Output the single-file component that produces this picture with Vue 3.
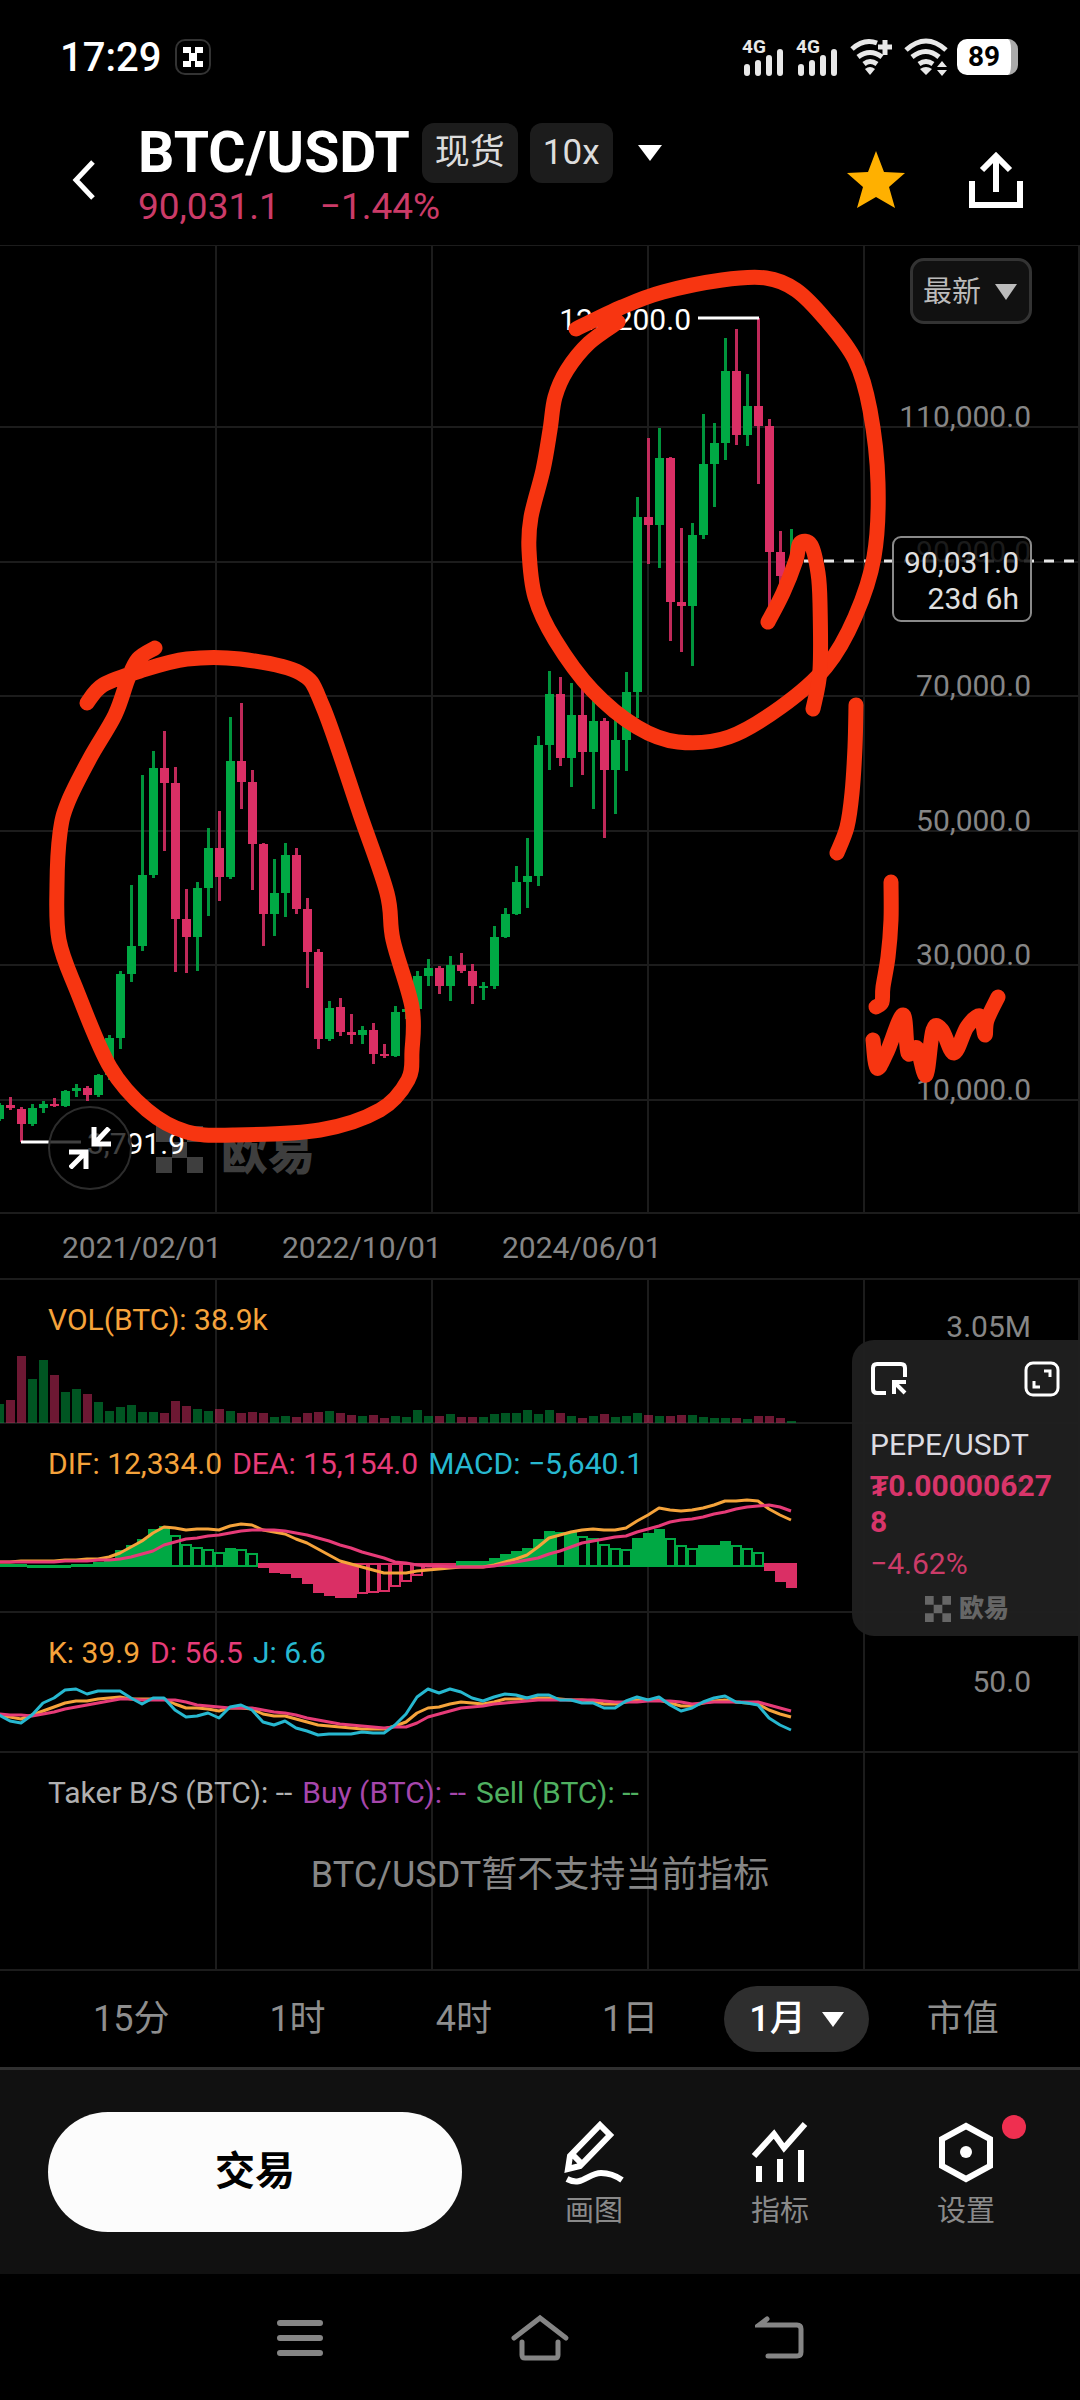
<template>
  <div class="app">
    <div class="status-bar">
      <div class="status-left">
        <span class="time">17:29</span>
        <span class="app-badge">
          <svg width="20" height="20" viewBox="0 0 5 5"><path d="M0 0h2v1.5H0zM3 0h2v1.5H3zM1.5 1.5h2v2h-2zM0 3.5h2V5H0zM3 3.5h2V5H3z" fill="#fff" /></svg>
        </span>
      </div>
      <div class="status-right">
        <svg v-for="n in 2" :key="n" class="signal" width="44" height="38" viewBox="0 0 44 38">
          <text x="1" y="15" font-size="19" font-weight="700" fill="#e8e8e8">4G</text>
          <path d="M6 29v6M17 25v10M28 20v15M39 14v21" stroke="#e8e8e8" stroke-width="6" stroke-linecap="round" />
        </svg>
        <svg width="44" height="38" viewBox="0 0 44 38" fill="none" stroke="#e8e8e8" stroke-width="5">
          <path d="M3 11Q15 0 28 5M9 19Q21 10 33 19M15 26Q21 21 28 26M29 9H43M36 2V17" />
          <path d="M16 31Q21 27 26 31L21 37Z" fill="#e8e8e8" stroke="none" />
        </svg>
        <svg width="46" height="38" viewBox="0 0 46 38" fill="none" stroke="#e8e8e8" stroke-width="5">
          <path d="M3 12Q23 -6 43 12M9 19Q23 8 36 19M16 26Q23 21 30 26" />
          <path d="M17 31Q23 27 29 31L23 37ZM34 29L39 23L44 29ZM34 32L39 38L44 32Z" fill="#e8e8e8" stroke="none" />
        </svg>
        <span class="battery">89</span>
      </div>
    </div>

    <header>
      <button class="icon-btn back" aria-label="返回">
        <svg width="24" height="40" viewBox="0 0 24 40"><path d="M21 2L4 20L21 38" fill="none" stroke="#fff" stroke-width="5" /></svg>
      </button>
      <div class="pair">
        <div class="pair-row">
          <h1>BTC/USDT</h1>
          <span class="chip">现货</span>
          <span class="chip">10x</span>
          <button class="icon-btn more" aria-label="切换交易对">
            <svg width="26" height="16" viewBox="0 0 26 16"><path d="M1 0H25L13 16Z" fill="#fff" /></svg>
          </button>
        </div>
        <div class="price-row">
          <span>90,031.1</span>
          <span>−1.44%</span>
        </div>
      </div>
      <button class="icon-btn star" aria-label="收藏">
        <svg width="60" height="60" viewBox="0 0 60 60"><path d="M30 1L38 22L59 23L43 37L49 58L30 47L11 58L17 37L1 23L22 22Z" fill="#ffb000" /></svg>
      </button>
      <button class="icon-btn" aria-label="分享">
        <svg width="56" height="58" viewBox="0 0 56 58" fill="none" stroke="#fff" stroke-width="6">
          <path d="M4 30V54H52V30M28 41V5M14 19L28 5L42 19" />
        </svg>
      </button>
    </header>

    <section class="chart">
      <svg viewBox="0 0 1080 968">
        <path :d="gridLines(968)" class="grid" />
        <path v-for="p in priceTicks" :key="p" :d="`M0 ${priceY(p)}H1080`" class="grid" />
        <g class="watermark">
          <path d="M156 880h16v16h-16zM187 880h16v16h-16zM172 896h15v16h-15zM156 911h16v16h-16zM187 911h16v16h-16z" />
          <text x="221" y="923" font-size="47">欧易</text>
        </g>
        <g v-for="(c, i) in candles" :key="i" :fill="candleColor(c)">
          <rect :x="candleX(i) - 1" :y="priceY(c[1])" width="3" :height="priceY(c[2]) - priceY(c[1])" opacity="0.88" />
          <rect
            :x="candleX(i) - 4"
            :y="priceY(Math.max(c[0], c[3]))"
            width="9"
            :height="Math.max(2, Math.abs(priceY(c[0]) - priceY(c[3])))"
          />
        </g>
        <path d="M698 72H759M21 896H81" stroke="#fff" stroke-width="3" />
        <text x="691" y="84" class="mark" text-anchor="end">126,200.0</text>
        <text x="185" y="908" class="mark" text-anchor="end">3,791.9</text>
        <text v-for="p in priceTicks" :key="p" x="1031" :y="priceY(p)" class="axis" text-anchor="end">{{ p }},000.0</text>
        <path d="M804 315H1080" stroke="#e6e6e6" stroke-width="3" stroke-dasharray="10 10" />
        <rect x="893" y="291" width="138" height="84" rx="8" class="price-tag" />
        <text x="1019" y="327" class="tag-text" text-anchor="end">90,031.0</text>
        <text x="1019" y="363" class="tag-text" text-anchor="end">23d 6h</text>
        <path v-for="(s, i) in strokes" :key="'s' + i" :d="smooth(s)" class="brush" />
      </svg>
      <button class="price-mode">
        最新
        <svg width="22" height="16" viewBox="0 0 22 16"><path d="M0 0H22L11 16Z" fill="#bbb" /></svg>
      </button>
      <button class="collapse" aria-label="收起">
        <svg width="42" height="42" viewBox="0 0 42 42" fill="none" stroke="#fff" stroke-width="5">
          <path d="M25 0V17H42M26 16L40 1M0 25H17V42M16 26L1 41" />
        </svg>
      </button>
    </section>

    <div class="dates">
      <span v-for="d in dates" :key="d">{{ d }}</span>
    </div>

    <section class="indicators">
      <div class="panel">
        <svg viewBox="0 0 1080 144">
          <path :d="gridLines(144)" class="grid" />
          <rect
            v-for="(v, i) in volumes"
            :key="i"
            :x="candleX(i) - 4"
            :y="143 - v"
            width="9"
            :height="v"
            :fill="candleColor(candles[i])"
            opacity="0.5"
          />
          <text x="1031" y="57" class="axis" text-anchor="end">3.05M</text>
        </svg>
        <p class="legend"><span class="orange">VOL(BTC): 38.9k</span></p>
      </div>

      <div class="panel">
        <svg viewBox="0 0 1080 189">
          <path :d="gridLines(189)" class="grid" />
          <rect
            v-for="(b, i) in macdBars"
            :key="i"
            :x="candleX(i) - 4"
            :y="b.y"
            width="9"
            :height="b.h"
            :fill="b.hollow ? '#000' : b.color"
            :stroke="b.color"
            stroke-width="2"
          />
          <polyline :points="linePoints(dif)" class="line orange" />
          <polyline :points="linePoints(dea)" class="line pink" />
          <text x="1031" y="72" class="axis" text-anchor="end">10.0k</text>
        </svg>
        <p class="legend">
          <span class="orange">DIF: 12,334.0</span>
          <span class="pink">DEA: 15,154.0</span>
          <span class="cyan">MACD: −5,640.1</span>
        </p>
      </div>

      <div class="panel">
        <svg viewBox="0 0 1080 140">
          <path :d="gridLines(140)" class="grid" />
          <polyline :points="linePoints(kLine)" class="line orange" />
          <polyline :points="linePoints(dLine)" class="line pink" />
          <polyline :points="linePoints(jLine)" class="line cyan" />
          <text x="1031" y="79" class="axis" text-anchor="end">50.0</text>
        </svg>
        <p class="legend">
          <span class="orange">K: 39.9</span>
          <span class="pink">D: 56.5</span>
          <span class="cyan">J: 6.6</span>
        </p>
      </div>

      <div class="panel">
        <svg viewBox="0 0 1080 218">
          <path :d="gridLines(218)" class="grid" />
        </svg>
        <p class="legend">
          <span class="gray">Taker B/S (BTC): --</span>
          <span class="purple">Buy (BTC): --</span>
          <span class="green">Sell (BTC): --</span>
        </p>
        <p class="unsupported">BTC/USDT暂不支持当前指标</p>
      </div>

      <aside class="float-card">
        <div class="float-tools">
          <button class="icon-btn" aria-label="返回应用">
            <svg width="38" height="36" viewBox="0 0 38 36" fill="none" stroke="#fff" stroke-width="4">
              <path d="M16 32H7Q3 32 3 28V7Q3 3 7 3H31Q35 3 35 7V16M24 33V21H36M25 22L35 32" />
            </svg>
          </button>
          <button class="icon-btn" aria-label="展开">
            <svg width="36" height="36" viewBox="0 0 36 36" fill="none" stroke="#fff" stroke-width="3">
              <rect x="2" y="2" width="32" height="32" rx="7" />
              <path d="M20 10H26V16M10 20V26H16" />
            </svg>
          </button>
        </div>
        <div class="float-name">PEPE/USDT</div>
        <div class="float-price">₮0.000006278</div>
        <div class="float-change">−4.62%</div>
        <div class="float-logo">
          <svg width="26" height="26" viewBox="0 0 3 3"><path d="M0 0h1v1H0zM2 0h1v1H2zM1 1h1v1H1zM0 2h1v1H0zM2 2h1v1H2z" fill="#666" /></svg>
          欧易
        </div>
      </aside>
    </section>

    <div class="periods">
      <button v-for="p in periods" :key="p" :class="{ active: p === period }" @click="period = p">
        {{ p }}
        <svg v-if="p === '1月'" width="22" height="15" viewBox="0 0 22 15"><path d="M0 0H22L11 15Z" fill="#fff" /></svg>
      </button>
    </div>

    <footer>
      <button class="trade">交易</button>
      <div class="tools">
        <button class="tool">
          <svg width="60" height="64" viewBox="0 0 60 64" fill="none" stroke="#fff" stroke-width="6">
            <path d="M36 4L46 14L16 45L4 48L6 35ZM8 33L18 43" />
            <path d="M3 58C18 66 24 52 37 52Q48 52 58 59" />
          </svg>
          画图
        </button>
        <button class="tool">
          <svg width="60" height="64" viewBox="0 0 60 64" fill="none" stroke="#fff" stroke-width="6">
            <path d="M4 35L24 13L34 27L55 3M9 45V61M30 38V61M51 29V61" />
          </svg>
          指标
        </button>
        <button class="tool">
          <svg width="60" height="64" viewBox="0 0 60 64" fill="none" stroke="#fff" stroke-width="6">
            <path d="M30 5L54 18V45L30 58L6 45V18Z" />
            <circle cx="30" cy="31" r="6" fill="#fff" stroke="none" />
          </svg>
          设置
          <i class="dot"></i>
        </button>
      </div>
    </footer>

    <nav>
      <button class="icon-btn" aria-label="菜单">
        <svg width="48" height="44" viewBox="0 0 48 44" stroke="#858585" stroke-width="6" stroke-linecap="round"><path d="M4 7H44M4 22H44M4 37H44" /></svg>
      </button>
      <button class="icon-btn" aria-label="主页">
        <svg width="60" height="48" viewBox="0 0 60 48" fill="none" stroke="#858585" stroke-width="5" stroke-linecap="round">
          <path d="M4 24L30 4L56 24M12 28V41Q12 44 15 44H45Q48 44 48 41V28" />
        </svg>
      </button>
      <button class="icon-btn" aria-label="后退">
        <svg width="50" height="46" viewBox="0 0 50 46" fill="none" stroke="#858585" stroke-width="5" stroke-linecap="round">
          <path d="M12 4L4 10H42Q46 10 46 14V37Q46 41 42 41H13" />
        </svg>
      </button>
    </nav>
  </div>
</template>

<script setup>
import { ref } from 'vue'

const UP = '#00a944'
const DOWN = '#da2f65'

const periods = ['15分', '1时', '4时', '1日', '1月', '市值']
const period = ref('1月')
const dates = ['2021/02/01', '2022/10/01', '2024/06/01']
const priceTicks = [110, 90, 70, 50, 30, 10]

// 月线 [开, 高, 低, 收],单位:千 USDT
const candles = [
  [7.2, 9.5, 6.9, 9.2], [9.2, 10.4, 8.5, 8.8], [8.7, 9, 3.8, 6.4], [6.4, 9.4, 6.2, 8.8],
  [8.8, 9.9, 8, 9.4], [9.4, 10.3, 8.9, 9.1], [9.1, 11.5, 8.9, 11.4], [11.4, 12.4, 10.5, 11.8],
  [11.8, 12.1, 9.9, 10.7], [10.7, 13.9, 10.4, 13.7], [13.7, 19.7, 13, 19.2], [19.2, 29.2, 17.6, 28.7],
  [28.7, 41.9, 27.6, 32.9], [32.9, 58.3, 32.2, 43.5], [43.5, 61.8, 43, 59.3], [59.3, 64.8, 47, 57.1],
  [57.1, 59.5, 29, 36.9], [36.9, 41.3, 28.8, 34.2], [34.2, 42.4, 29.2, 41.5], [41.5, 50.4, 37.4, 47.5],
  [47.5, 52.9, 39.6, 43.1], [43.1, 66.9, 42.9, 60.4], [60.4, 69, 53.2, 57.3], [57.3, 59, 41.2, 48],
  [48, 48.2, 32.9, 37.7], [37.7, 45.8, 34.4, 40.8], [40.8, 48.2, 37.2, 46.4], [46.4, 47.5, 37.7, 38.4],
  [38.4, 40, 26.7, 32], [32, 32.4, 17.6, 19.1], [19.1, 24.7, 18.7, 23.7], [23.8, 25.1, 19.5, 20.1],
  [20.1, 22.8, 18.3, 19.7], [19.7, 21, 18.3, 20.4], [20.4, 21.4, 15.4, 16.8], [16.8, 18.3, 16.3, 16.5],
  [16.5, 24, 16.4, 23.1], [23.1, 23.7, 22, 23.5], [23.5, 29.2, 22, 28.4], [28.4, 30.9, 27, 29.6],
  [29.6, 29.9, 25.8, 27], [27, 31.4, 24.7, 30.1], [30.1, 31.8, 28.9, 29.2], [29.2, 30.2, 24.2, 27],
  [26.9, 27.5, 24.8, 27], [27, 35.9, 26.5, 34.2], [34.2, 38.5, 34.1, 37.6], [37.6, 44.8, 37.5, 42.4],
  [42.4, 48.9, 38.5, 43.3], [43.3, 64.1, 41.8, 62.7], [62.7, 73.7, 59, 70.3], [70.3, 72.8, 59.6, 60.8],
  [60.8, 72, 56.5, 67.2], [67.2, 71, 58.3, 61.7], [61.7, 69.3, 53.2, 66.3], [66.3, 66.8, 48.9, 59],
  [59, 66.7, 52.5, 63.5], [63.5, 73.6, 58.9, 70.6], [70.6, 99.6, 66.8, 96.6], [96.6, 108.4, 89.6, 95.4],
  [95.4, 109.9, 89.1, 105.4], [105.4, 105.5, 78.2, 84], [84, 95, 76.6, 83.4], [83.4, 95.7, 74.5, 94],
  [94, 111.9, 93.4, 104.5], [104.5, 110.6, 98.1, 107.6], [107.6, 123.2, 105.1, 118.3], [118.3, 124.6, 107.3, 108.8],
  [108.8, 117.9, 107.2, 113.1], [113.1, 126.2, 101.5, 110.2], [110.2, 111.2, 80.5, 91.4], [91.4, 94.6, 86, 87.9],
  [87.9, 94.8, 87.5, 90],
]

const volumes = [
  19, 23, 67, 44, 63, 48, 31, 34, 29, 21, 12, 16, 18, 11, 11, 10, 22, 17, 14, 12, 14, 12, 10, 11, 10,
  6, 7, 6, 10, 11, 12, 10, 8, 7, 8, 5, 7, 6, 13, 7, 7, 9, 6, 6, 6, 9, 10, 10, 13, 9,
  13, 10, 7, 5, 7, 9, 6, 7, 10, 8, 7, 7, 8, 8, 6, 5, 5, 5, 4, 7, 7, 5, 2,
]

const macd = [
  1, 1, 1, 0, 0, 0, 0, 1, 1, 3, 6, 15, 20, 26, 36, 39, 30, 21, 18, 16, 13, 17, 16, 12, -3,
  -8, -9, -13, -19, -28, -31, -33, -33, -29, -28, -27, -22, -17, -11, -5, -3, -1, 4, 4, 4, 7, 11, 14, 17, 26,
  34, 33, 33, 29, 27, 21, 17, 16, 27, 32, 36, 27, 20, 17, 20, 20, 24, 20, 17, 13, -6, -17, -23,
]

// 以下各线为面板内的纵坐标
const dif = [
  138, 138, 137, 137, 137, 137, 136, 136, 135, 135, 133, 129, 123, 117, 109, 103, 104, 106, 105, 105, 106, 102, 100, 101, 106,
  108, 110, 115, 119, 125, 131, 137, 140, 143, 146, 149, 149, 149, 147, 146, 145, 144, 143, 143, 143, 141, 138, 135, 131, 123,
  114, 111, 108, 106, 105, 106, 106, 104, 97, 91, 84, 86, 87, 86, 84, 81, 77, 77, 76, 77, 85, 91, 96,
]
const dea = [
  138, 138, 138, 138, 138, 138, 137, 137, 137, 136, 136, 135, 133, 130, 127, 121, 118, 115, 114, 112, 111, 109, 107, 106, 106,
  106, 107, 109, 111, 114, 117, 121, 124, 128, 131, 134, 138, 139, 141, 142, 142, 143, 143, 143, 143, 142, 140, 138, 136, 134,
  130, 127, 123, 119, 117, 115, 113, 112, 108, 105, 102, 98, 96, 95, 93, 90, 88, 85, 83, 82, 81, 83, 87,
]
const kLine = [
  102, 104, 106, 102, 98, 94, 90, 88, 88, 86, 85, 84, 86, 86, 86, 86, 91, 95, 95, 96, 98, 95, 95, 96, 101,
  103, 103, 106, 109, 112, 113, 114, 115, 116, 116, 116, 113, 109, 100, 95, 94, 91, 89, 90, 91, 89, 86, 86, 85, 85,
  85, 86, 87, 87, 88, 91, 91, 89, 87, 87, 87, 90, 93, 93, 90, 88, 87, 89, 90, 91, 97, 101, 104,
]
const dLine = [
  101, 102, 102, 103, 101, 99, 96, 94, 92, 90, 88, 86, 86, 87, 87, 87, 87, 89, 92, 93, 94, 95, 95, 95, 97,
  99, 100, 102, 105, 107, 109, 111, 112, 113, 114, 115, 114, 114, 110, 104, 101, 98, 95, 94, 93, 91, 90, 89, 88, 87,
  87, 87, 87, 87, 87, 88, 89, 89, 89, 88, 88, 88, 89, 91, 90, 89, 89, 89, 89, 89, 92, 95, 98,
]
const jLine = [
  102, 108, 110, 102, 90, 85, 77, 76, 81, 78, 78, 78, 85, 91, 85, 85, 97, 104, 103, 100, 105, 94, 92, 97, 109,
  112, 108, 115, 118, 122, 121, 121, 121, 119, 120, 120, 112, 101, 84, 76, 80, 76, 79, 85, 88, 84, 81, 82, 85, 82,
  82, 87, 87, 90, 90, 95, 95, 88, 84, 87, 84, 92, 98, 95, 89, 85, 83, 89, 90, 92, 105, 112, 117,
]

// 手绘标注
const strokes = [
  [[155, 402], [138, 413], [128, 433], [115, 469], [90, 512], [68, 556], [60, 587], [57, 639], [59, 694], [77, 745],
    [110, 821], [147, 864], [187, 886], [233, 889], [320, 884], [380, 864], [408, 834], [412, 805], [412, 761],
    [393, 694], [387, 647], [360, 568], [323, 461], [300, 427], [240, 413], [187, 413], [140, 425], [103, 439], [87, 457]],
  [[618, 76], [589, 97], [567, 124], [555, 151], [550, 184], [543, 224], [531, 271], [529, 304], [535, 351], [555, 394],
    [592, 444], [637, 481], [678, 496], [729, 491], [781, 461], [826, 421], [855, 371], [874, 311], [878, 237],
    [870, 164], [855, 114], [826, 74], [796, 44], [766, 32], [722, 34], [663, 46], [622, 61], [576, 83]],
  [[768, 376], [783, 347], [796, 314], [800, 297], [811, 299], [818, 327], [820, 357], [820, 424], [813, 463]],
  [[856, 459], [855, 501], [852, 547], [847, 581], [837, 607]],
  [[891, 636], [891, 674], [888, 711], [883, 741], [882, 756], [876, 761]],
  [[873, 794], [877, 822], [887, 806], [903, 769], [908, 807], [917, 802], [926, 829], [933, 784], [942, 784],
    [954, 807], [967, 781], [980, 770], [985, 789], [987, 774], [998, 751]],
]

const candleX = (i) => 11 * i - 1
const priceY = (p) => Math.round(181 + (110 - p) * 6.73)
const candleColor = (c) => (c[3] >= c[0] ? UP : DOWN)
const gridLines = (h) => `M216 0V${h}M432 0V${h}M648 0V${h}M864 0V${h}M1079 0V${h}M0 ${h - 1}H1080`
const linePoints = (ys) => ys.map((y, i) => `${candleX(i)},${y}`).join(' ')

// 柱子比上一根短时画成空心
const macdBars = macd.map((v, i) => {
  const prev = i ? macd[i - 1] : 0
  return {
    y: v >= 0 ? 142 - v : 140,
    h: Math.abs(v) || 1,
    color: v >= 0 ? UP : DOWN,
    hollow: v >= 0 ? v < prev : v > prev,
  }
})

// Catmull-Rom 转三次贝塞尔
const smooth = (pts) => {
  let d = `M${pts[0]}`
  for (let i = 0; i < pts.length - 1; i++) {
    const p0 = pts[i - 1] || pts[i]
    const p1 = pts[i]
    const p2 = pts[i + 1]
    const p3 = pts[i + 2] || p2
    const c1 = [p1[0] + (p2[0] - p0[0]) / 6, p1[1] + (p2[1] - p0[1]) / 6]
    const c2 = [p2[0] - (p3[0] - p1[0]) / 6, p2[1] - (p3[1] - p1[1]) / 6]
    d += `C${c1} ${c2} ${p2}`
  }
  return d
}
</script>

<style>
body {
  background: #000;
}
</style>

<style scoped>
.app {
  min-height: 100vh;
  background: #000;
  color: #fff;
  font-family: Roboto, 'Noto Sans CJK SC', sans-serif;
  font-size: 30px;
}

button {
  padding: 0;
  border: none;
  background: none;
  color: inherit;
  font: inherit;
  cursor: pointer;
}

svg {
  display: block;
  flex: none;
}

h1,
p {
  margin: 0;
}

.icon-btn {
  display: flex;
}

.status-bar {
  display: flex;
  justify-content: space-between;
  align-items: center;
  height: 114px;
  padding: 0 62px 0 60px;
}

.status-left,
.status-right {
  display: flex;
  align-items: center;
}

.status-left {
  gap: 14px;
}

.status-right {
  gap: 10px;
}

.signal {
  overflow: visible;
}

.time {
  font-size: 40px;
  font-weight: 500;
}

.app-badge {
  display: flex;
  padding: 6px;
  border: 2px solid #333;
  border-radius: 10px;
}

.battery {
  width: 54px;
  margin-left: -2px;
  border-right: 7px solid #aaa;
  border-radius: 10px;
  background: #fff;
  color: #000;
  font-size: 28px;
  font-weight: 700;
  line-height: 36px;
  text-align: center;
}

header {
  display: flex;
  align-items: center;
  height: 131px;
  padding: 0 56px 0 72px;
  border-bottom: 1px solid #1c1c1c;
}

.back {
  margin-right: 42px;
}

.pair {
  flex: 1;
  padding-bottom: 8px;
}

.pair-row {
  display: flex;
  align-items: center;
  gap: 12px;
}

.pair-row h1 {
  font-size: 57px;
  font-weight: 700;
  line-height: 62px;
}

.chip {
  padding: 0 13px;
  border-radius: 12px;
  background: #1c1c1c;
  color: #ddd;
  font-size: 35px;
  line-height: 60px;
}

.more {
  margin-left: 12px;
}

.price-row {
  display: flex;
  gap: 40px;
  color: #cb3b68;
  font-size: 37px;
  line-height: 46px;
}

.star {
  margin-right: 62px;
}

.chart,
.indicators {
  position: relative;
}

.chart > svg,
.panel > svg {
  width: 100%;
}

.grid {
  fill: none;
  stroke: #1c1c1c;
  stroke-width: 2;
}

.watermark {
  fill: #3e3e3e;
  font-weight: 900;
}

.mark {
  fill: #fff;
  font-size: 30px;
}

.axis {
  fill: #868686;
  font-size: 30px;
}

.price-tag {
  fill: rgba(0, 0, 0, 0.8);
  stroke: #8a8a8a;
  stroke-width: 2;
}

.tag-text {
  fill: #e0e0e0;
  font-size: 30px;
}

.brush {
  fill: none;
  stroke: #f73511;
  stroke-width: 15;
  stroke-linecap: round;
  stroke-linejoin: round;
}

.price-mode {
  position: absolute;
  top: 12px;
  right: 48px;
  display: flex;
  align-items: center;
  gap: 14px;
  padding: 2px 12px 0 10px;
  border: 3px solid #333;
  border-radius: 14px;
  background: #111;
  color: #bbb;
  font-size: 29px;
  line-height: 58px;
}

.collapse {
  position: absolute;
  bottom: 24px;
  left: 48px;
  display: flex;
  align-items: center;
  justify-content: center;
  width: 84px;
  height: 84px;
  border: 2px solid #2c2c2c;
  border-radius: 50%;
  background: rgba(0, 0, 0, 0.75);
}

.dates {
  display: flex;
  padding: 4px 0 0 62px;
  border-bottom: 2px solid #1c1c1c;
  color: #868686;
  line-height: 60px;
}

.dates span {
  width: 220px;
}

.panel {
  display: grid;
}

.panel > * {
  grid-area: 1 / 1;
}

.legend {
  display: flex;
  gap: 10px;
  padding: 20px 0 0 48px;
  line-height: 40px;
}

.line {
  fill: none;
  stroke-width: 3;
  stroke-linejoin: round;
}

.orange {
  color: #f5a33b;
}

.pink {
  color: #e63b78;
}

.cyan {
  color: #27b8d0;
}

.line.orange,
.line.pink,
.line.cyan {
  stroke: currentColor;
}

.gray {
  color: #b0b0b0;
}

.purple {
  color: #a646ac;
}

.green {
  color: #4fb060;
}

.unsupported {
  padding-top: 96px;
  color: #868686;
  font-size: 36px;
  line-height: 52px;
  text-align: center;
}

.float-card {
  position: absolute;
  top: 60px;
  right: 0;
  box-sizing: border-box;
  width: 228px;
  padding: 21px 20px 10px 18px;
  border-radius: 22px 0 0 22px;
  background: rgba(32, 32, 32, 0.94);
}

.float-tools {
  display: flex;
  justify-content: space-between;
  margin-bottom: 28px;
}

.float-name {
  margin-bottom: 3px;
  color: #dcdce2;
  line-height: 40px;
}

.float-price {
  color: #d8356a;
  font-weight: 700;
  line-height: 36px;
  word-break: break-all;
}

.float-change {
  margin-bottom: 4px;
  color: #cb3b68;
  line-height: 48px;
}

.float-logo {
  display: flex;
  align-items: center;
  justify-content: center;
  gap: 8px;
  margin-right: -4px;
  color: #666;
  font-size: 25px;
  font-weight: 900;
  line-height: 34px;
}

.periods {
  display: grid;
  grid-template-columns: repeat(6, 1fr);
  align-items: center;
  justify-items: center;
  height: 96px;
  padding: 0 34px 0 48px;
  border-bottom: 3px solid #303030;
}

.periods button {
  display: flex;
  align-items: center;
  gap: 16px;
  padding: 0 25px;
  border-radius: 33px;
  color: #8e8e8e;
  font-size: 36px;
  line-height: 66px;
}

.periods .active {
  background: #2e2e2e;
  color: #fff;
  font-weight: 500;
}

footer {
  display: flex;
  align-items: center;
  padding: 42px 21px 42px 48px;
  background: #111;
}

.trade {
  flex: 414;
  border-radius: 60px;
  background: #fcfcfc;
  color: #000;
  font-size: 40px;
  font-weight: 700;
  line-height: 120px;
}

.tools {
  flex: 558;
  display: grid;
  grid-template-columns: repeat(3, 1fr);
  margin-left: 39px;
}

.tool {
  position: relative;
  display: flex;
  flex-direction: column;
  align-items: center;
  gap: 6px;
  padding-top: 8px;
  color: #8a8a8a;
  font-size: 29px;
  line-height: 40px;
}

.dot {
  position: absolute;
  top: 2px;
  left: calc(50% + 36px);
  width: 24px;
  height: 24px;
  border-radius: 50%;
  background: #ef2f50;
}

nav {
  display: grid;
  grid-template-columns: repeat(3, 1fr);
  align-items: center;
  justify-items: center;
  height: 127px;
  padding: 0 180px;
}
</style>
